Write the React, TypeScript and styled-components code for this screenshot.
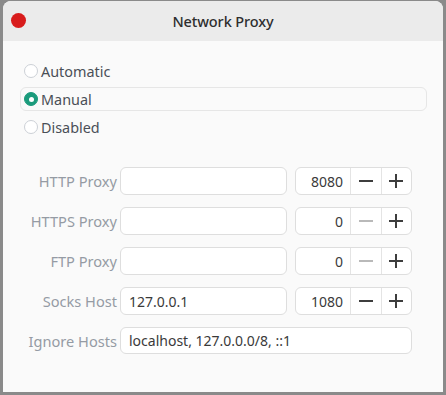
import { Fragment } from 'react';
import styled, { createGlobalStyle } from 'styled-components';

const GlobalStyle = createGlobalStyle`
  html, body {
    margin: 0;
    padding: 0;
    background: #8a8a8a;
  }
  body {
    font-family: 'Noto Sans', 'Open Sans', sans-serif;
    width: 446px;
    height: 395px;
    overflow: hidden;
  }
`;

const Window = styled.div`
  margin: 1px 3px 0 3px;
  width: 440px;
  height: 391px;
  background: #fafafa;
  border-radius: 8px 8px 0 0;
  overflow: hidden;
  display: flex;
  flex-direction: column;
`;

const HeaderBar = styled.header`
  height: 40px;
  flex-shrink: 0;
  background: #ebebeb;
  display: flex;
  align-items: center;
  justify-content: center;
  position: relative;
`;

const CloseDot = styled.span`
  position: absolute;
  left: 8px;
  top: 12px;
  width: 15px;
  height: 15px;
  border-radius: 50%;
  background: #d81c1c;
`;

const Title = styled.h1`
  margin: 0;
  font-size: 14.5px;
  font-weight: 500;
  color: #2e2e2e;
  letter-spacing: -0.1px;
`;

const Body = styled.div`
  display: flex;
  flex-direction: column;
  padding: 18px 16px 0 17px;
`;

const RadioList = styled.div`
  display: flex;
  flex-direction: column;
  gap: 4px;
`;

const RadioRow = styled.label<{ $focused?: boolean }>`
  display: flex;
  align-items: center;
  gap: 3px;
  height: 22px;
  padding-left: 3px;
  border-radius: 6px;
  border: 1px solid ${(p) => (p.$focused ? '#e6e6e6' : 'transparent')};
  font-size: 14.4px;
  color: #4a4f57;
`;

const RadioCircle = styled.span<{ $checked?: boolean }>`
  width: 14px;
  height: 14px;
  box-sizing: border-box;
  border-radius: 50%;
  border: 1px solid ${(p) => (p.$checked ? '#1b9b7c' : '#ccd0d6')};
  background: ${(p) => (p.$checked ? '#1b9b7c' : '#ffffff')};
  display: flex;
  align-items: center;
  justify-content: center;

  &::after {
    content: '';
    width: 5px;
    height: 5px;
    border-radius: 50%;
    background: #ffffff;
    display: ${(p) => (p.$checked ? 'block' : 'none')};
  }
`;

const Form = styled.div`
  display: grid;
  grid-template-columns: 100px 167px 125px;
  row-gap: 12px;
  align-items: center;
  margin-top: 28px;
`;

const FieldLabel = styled.span`
  font-size: 14.6px;
  color: #959ba4;
  text-align: right;
  padding-right: 3px;
  white-space: nowrap;
`;

const Entry = styled.div<{ $wide?: boolean }>`
  grid-column: ${(p) => (p.$wide ? '2 / 4' : 'auto')};
  height: ${(p) => (p.$wide ? '27px' : '28px')};
  box-sizing: border-box;
  background: #ffffff;
  border: 1px solid #dedede;
  border-radius: 6px;
  display: flex;
  align-items: center;
  padding-left: 8px;
  font-size: 14px;
  color: #3a3a3a;
`;

const SpinButton = styled.div`
  margin-left: 8px;
  height: 28px;
  box-sizing: border-box;
  background: #ffffff;
  border: 1px solid #dedede;
  border-radius: 6px;
  display: flex;
  align-items: stretch;
`;

const SpinValue = styled.span`
  width: 55px;
  flex-shrink: 0;
  display: flex;
  align-items: center;
  justify-content: flex-end;
  padding-right: 7px;
  box-sizing: border-box;
  font-size: 14px;
  color: #3a3a3a;
  border-right: 1px solid #e4e4e4;
`;

const SpinStep = styled.span<{ $disabled?: boolean; $divider?: boolean }>`
  flex: 1;
  display: flex;
  align-items: center;
  justify-content: center;
  border-right: ${(p) => (p.$divider ? '1px solid #e4e4e4' : 'none')};
  color: ${(p) => (p.$disabled ? '#b9b9b9' : '#3d3d3d')};
`;

function MinusIcon() {
  return (
    <svg width="14" height="14" viewBox="0 0 14 14">
      <rect x="0" y="6" width="14" height="2" fill="currentColor" />
    </svg>
  );
}

function PlusIcon() {
  return (
    <svg width="14" height="14" viewBox="0 0 14 14">
      <rect x="0" y="6" width="14" height="2" fill="currentColor" />
      <rect x="6" y="0" width="2" height="14" fill="currentColor" />
    </svg>
  );
}

interface ProxyRow {
  label: string;
  host: string;
  port: number;
}

const rows: ProxyRow[] = [
  { label: 'HTTP Proxy', host: '', port: 8080 },
  { label: 'HTTPS Proxy', host: '', port: 0 },
  { label: 'FTP Proxy', host: '', port: 0 },
  { label: 'Socks Host', host: '127.0.0.1', port: 1080 },
];

const modes = ['Automatic', 'Manual', 'Disabled'];

export default function App() {
  const selected = 'Manual';

  return (
    <>
      <GlobalStyle />
      <Window>
        <HeaderBar>
          <CloseDot />
          <Title>Network Proxy</Title>
        </HeaderBar>
        <Body>
          <RadioList>
            {modes.map((mode) => (
              <RadioRow key={mode} $focused={mode === selected}>
                <RadioCircle $checked={mode === selected} />
                {mode}
              </RadioRow>
            ))}
          </RadioList>

          <Form>
            {rows.map((row) => (
              <Fragment key={row.label}>
                <FieldLabel>{row.label}</FieldLabel>
                <Entry>{row.host}</Entry>
                <SpinButton>
                  <SpinValue>{row.port}</SpinValue>
                  <SpinStep $disabled={row.port === 0} $divider>
                    <MinusIcon />
                  </SpinStep>
                  <SpinStep>
                    <PlusIcon />
                  </SpinStep>
                </SpinButton>
              </Fragment>
            ))}
            <FieldLabel>Ignore Hosts</FieldLabel>
            <Entry $wide>localhost, 127.0.0.0/8, ::1</Entry>
          </Form>
        </Body>
      </Window>
    </>
  );
}
